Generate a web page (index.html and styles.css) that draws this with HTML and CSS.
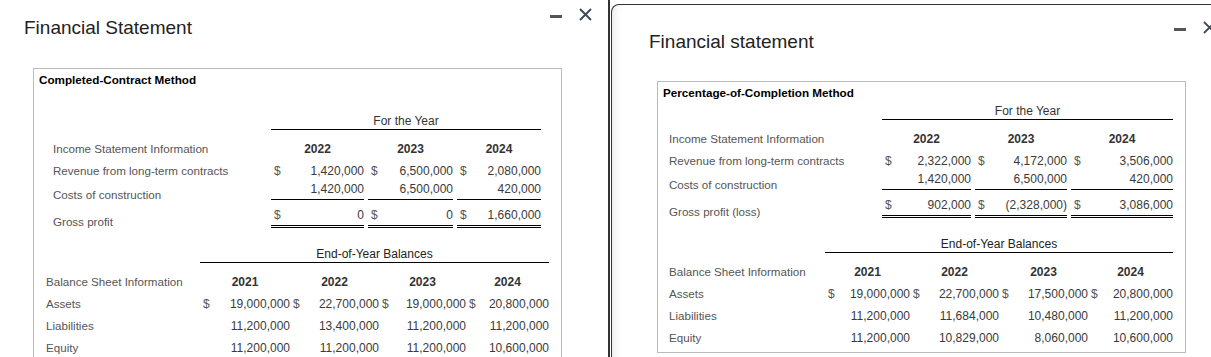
FILE: index.html
```html
<!DOCTYPE html>
<html>
<head>
<meta charset="utf-8">
<title>Financial Statement</title>
<link rel="stylesheet" href="styles.css">
</head>
<body>
<div class="screen">
  <section class="win win-a">
    <div class="win-head">
      <h1 class="win-title">Financial Statement</h1>
      <div class="win-ctrl">
        <span class="ctrl-min"></span>
        <svg class="ctrl-x" viewBox="0 0 13 13"><path d="M1 1L12 12M12 1L1 12"/></svg>
      </div>
    </div>
    <div class="panel">
      <div class="panel-title">Completed-Contract Method</div>
      <div class="tbl inc inc-a">
        <div class="grp">For the Year</div>
        <div class="lbl">Income Statement Information</div>
        <div class="yr">2022</div><div class="yr">2023</div><div class="yr">2024</div>
        <div class="lbl">Revenue from long-term contracts</div>
        <div class="val"><span class="cur">$</span><span>1,420,000</span></div>
        <div class="val"><span class="cur">$</span><span>6,500,000</span></div>
        <div class="val"><span class="cur">$</span><span>2,080,000</span></div>
        <div class="lbl sub">Costs of construction</div>
        <div class="val sub"><span>1,420,000</span></div>
        <div class="val sub"><span>6,500,000</span></div>
        <div class="val sub"><span>420,000</span></div>
        <div class="lbl tot">Gross profit</div>
        <div class="val tot"><span class="cur">$</span><span>0</span></div>
        <div class="val tot"><span class="cur">$</span><span>0</span></div>
        <div class="val tot"><span class="cur">$</span><span>1,660,000</span></div>
      </div>
      <div class="tbl bal bal-a">
        <div class="grp">End-of-Year Balances</div>
        <div class="lbl">Balance Sheet Information</div>
        <div class="yr">2021</div><div class="yr">2022</div><div class="yr">2023</div><div class="yr">2024</div>
        <div class="lbl">Assets</div>
        <div class="val"><span class="cur">$</span><span>19,000,000</span></div>
        <div class="val"><span class="cur">$</span><span>22,700,000</span></div>
        <div class="val"><span class="cur">$</span><span>19,000,000</span></div>
        <div class="val"><span class="cur">$</span><span>20,800,000</span></div>
        <div class="lbl">Liabilities</div>
        <div class="val"><span>11,200,000</span></div>
        <div class="val"><span>13,400,000</span></div>
        <div class="val"><span>11,200,000</span></div>
        <div class="val"><span>11,200,000</span></div>
        <div class="lbl">Equity</div>
        <div class="val"><span>11,200,000</span></div>
        <div class="val"><span>11,200,000</span></div>
        <div class="val"><span>11,200,000</span></div>
        <div class="val"><span>10,600,000</span></div>
      </div>
    </div>
  </section>

  <section class="win win-b">
    <div class="win-head">
      <h1 class="win-title">Financial statement</h1>
      <div class="win-ctrl">
        <span class="ctrl-min"></span>
        <svg class="ctrl-x" viewBox="0 0 13 13"><path d="M1 1L12 12M12 1L1 12"/></svg>
      </div>
    </div>
    <div class="panel">
      <div class="panel-title">Percentage-of-Completion Method</div>
      <div class="tbl inc inc-b">
        <div class="grp">For the Year</div>
        <div class="lbl">Income Statement Information</div>
        <div class="yr">2022</div><div class="yr">2023</div><div class="yr">2024</div>
        <div class="lbl">Revenue from long-term contracts</div>
        <div class="val"><span class="cur">$</span><span>2,322,000</span></div>
        <div class="val"><span class="cur">$</span><span>4,172,000</span></div>
        <div class="val"><span class="cur">$</span><span>3,506,000</span></div>
        <div class="lbl sub">Costs of construction</div>
        <div class="val sub"><span>1,420,000</span></div>
        <div class="val sub"><span>6,500,000</span></div>
        <div class="val sub"><span>420,000</span></div>
        <div class="lbl tot">Gross profit (loss)</div>
        <div class="val tot"><span class="cur">$</span><span>902,000</span></div>
        <div class="val tot"><span class="cur">$</span><span>(2,328,000)</span></div>
        <div class="val tot"><span class="cur">$</span><span>3,086,000</span></div>
      </div>
      <div class="tbl bal bal-b">
        <div class="grp">End-of-Year Balances</div>
        <div class="lbl">Balance Sheet Information</div>
        <div class="yr">2021</div><div class="yr">2022</div><div class="yr">2023</div><div class="yr">2024</div>
        <div class="lbl">Assets</div>
        <div class="val"><span class="cur">$</span><span>19,000,000</span></div>
        <div class="val"><span class="cur">$</span><span>22,700,000</span></div>
        <div class="val"><span class="cur">$</span><span>17,500,000</span></div>
        <div class="val"><span class="cur">$</span><span>20,800,000</span></div>
        <div class="lbl">Liabilities</div>
        <div class="val"><span>11,200,000</span></div>
        <div class="val"><span>11,684,000</span></div>
        <div class="val"><span>10,480,000</span></div>
        <div class="val"><span>11,200,000</span></div>
        <div class="lbl">Equity</div>
        <div class="val"><span>11,200,000</span></div>
        <div class="val"><span>10,829,000</span></div>
        <div class="val"><span>8,060,000</span></div>
        <div class="val"><span>10,600,000</span></div>
      </div>
    </div>
  </section>
</div>
</body>
</html>
```

FILE: styles.css
```css
* { box-sizing: border-box; margin: 0; padding: 0; }
html, body { background: #fff; }
body {
  font-family: "Liberation Sans", Arial, sans-serif;
  font-size: 12px;
  color: #333;
  width: 1211px;
  height: 357px;
  overflow: hidden;
}
.screen {
  display: flex;
  align-items: flex-start;
  width: 1211px;
  height: 357px;
  overflow: hidden;
}
.win { flex: none; background: #fff; }
.win-a {
  width: 610px;
  height: 357px;
  border-right: 2px solid #333;
  padding: 8px 16px 0 24px;
}
.win-b {
  width: 622px;
  height: 380px;
  margin: 4px 0 0 1px;
  border-top: 1px solid #333;
  border-left: 1px solid #333;
  border-top-left-radius: 8px;
  padding: 16px 17px 0 37px;
  box-shadow: inset 10px 0 10px -8px rgba(0, 0, 0, 0.1);
}
.win-head {
  display: flex;
  justify-content: space-between;
  align-items: flex-start;
}
.win-title {
  font-size: 19px;
  font-weight: normal;
  line-height: 22px;
  color: #222;
}
.win-a .win-title { margin-top: 9px; }
.win-b .win-title { margin-top: 10px; }
.win-ctrl {
  display: flex;
  align-items: flex-start;
  gap: 17px;
}
.ctrl-min {
  display: block;
  width: 12px;
  height: 3px;
  background: #555;
  margin-top: 7px;
}
.ctrl-x {
  display: block;
  width: 13px;
  height: 13px;
  stroke: #3e4a59;
  stroke-width: 1.9;
  fill: none;
}
.panel {
  width: 529px;
  border: 1px solid #bbb;
  padding: 4px 0 3px 5px;
}
.win-a .panel { margin: 29px 0 0 9px; }
.win-b .panel { margin: 28px 0 0 8px; }
.panel-title {
  font-weight: bold;
  font-size: 11.7px;
  line-height: 14px;
  color: #000;
}
.tbl { display: grid; }
.inc-a {
  margin: 27px 0 0 14px;
  grid-template-columns: 214px 93px 85px 84px;
  column-gap: 4px;
}
.inc-b {
  margin: 4px 0 0 6px;
  grid-template-columns: 209px 89px 92px 102px;
  column-gap: 4px;
}
.bal-a {
  margin: 11px 0 0 7px;
  grid-template-columns: 154px 90px 89px 87px 83px;
}
.bal-b {
  margin: 11px 0 0 6px;
  grid-template-columns: 156px 85px 89px 89px 85px;
}
.grp {
  grid-column: 2 / -1;
  text-align: center;
  line-height: 14px;
  padding-bottom: 1px;
  border-bottom: 1px solid #000;
  margin-bottom: 8px;
  color: #333;
}
.bal .grp { color: #222; }
.lbl {
  font-size: 11.6px;
  line-height: 22px;
  color: #555;
  white-space: nowrap;
}
.lbl.sub { line-height: 26px; }
.lbl.tot { line-height: 28px; }
.yr {
  line-height: 22px;
  text-align: center;
  font-weight: bold;
  color: #333;
}
.val {
  line-height: 22px;
  display: flex;
  justify-content: flex-end;
  white-space: nowrap;
  color: #3a3a3a;
}
.cur {
  margin-right: auto;
  padding-left: 3px;
  color: #555;
}
.val.sub {
  align-self: start;
  line-height: 14px;
  padding-bottom: 3px;
  border-bottom: 1px solid #000;
}
.val.tot {
  align-self: start;
  line-height: 14px;
  padding-bottom: 3px;
  border-bottom: 3px double #000;
}
```
